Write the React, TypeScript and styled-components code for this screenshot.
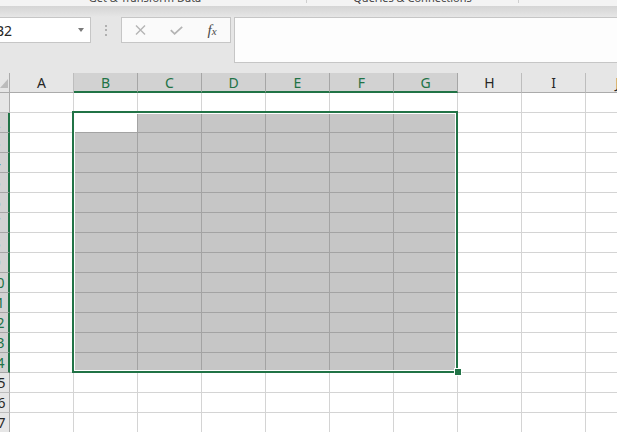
import React from 'react';
import styled, { createGlobalStyle } from 'styled-components';

const GREEN = '#217346';

const GlobalStyle = createGlobalStyle`
  html, body { margin: 0; padding: 0; background: #ffffff; overflow: hidden; }
  body { font-family: "Noto Sans", "Liberation Sans", sans-serif; }
  * { box-sizing: border-box; }
`;

const Window = styled.div`
  width: 617px;
  height: 432px;
  overflow: hidden;
  background: #ffffff;
  display: flex;
  flex-direction: column;
`;

const Ribbon = styled.div`
  height: 6px;
  flex-shrink: 0;
  background: #f3f3f3;
  display: flex;
  overflow: hidden;
`;

const RibbonGroup = styled.div<{ $width: number; $shift?: number }>`
  width: ${p => p.$width}px;
  flex-shrink: 0;
  display: flex;
  justify-content: center;
  padding-right: ${p => p.$shift ?? 1}px;
  background: linear-gradient(#cfcfcf, #cfcfcf) right top / 1px 3px no-repeat;
`;

const RibbonLabel = styled.span`
  font-size: 11px;
  line-height: 14px;
  margin-top: -9px;
  color: #444444;
  white-space: nowrap;
`;

const FormulaArea = styled.div`
  height: 67px;
  flex-shrink: 0;
  background: linear-gradient(#d5d5d5 0px, #dedede 6px, #e6e6e6 11px);
  padding-top: 11px;
  display: flex;
  align-items: flex-start;
`;

const NameBox = styled.div`
  margin-left: -10px;
  width: 101px;
  height: 26px;
  flex-shrink: 0;
  background: #ffffff;
  border: 1px solid #c6c6c6;
  display: flex;
  align-items: center;
  padding-left: 4px;
  padding-right: 6px;
  font-size: 14px;
  color: #262626;
`;

const NameText = styled.span`
  flex: 1;
`;

const DropArrow = styled.span`
  width: 0;
  height: 0;
  border-left: 3px solid transparent;
  border-right: 3px solid transparent;
  border-top: 4px solid #7a7a7a;
`;

const DotsSep = styled.div`
  width: 30px;
  height: 26px;
  flex-shrink: 0;
  display: flex;
  flex-direction: column;
  align-items: center;
  justify-content: center;
  gap: 2.5px;
`;

const Dot = styled.span`
  width: 2px;
  height: 2px;
  background: #b0b0b0;
`;

const ButtonBox = styled.div`
  width: 110px;
  height: 26px;
  flex-shrink: 0;
  background: #fafafa;
  border: 1px solid #c6c6c6;
  display: flex;
  align-items: center;
`;

const IconSlot = styled.div`
  width: 36px;
  height: 24px;
  display: flex;
  align-items: center;
  justify-content: center;
`;

const Fx = styled.span`
  font-family: "Liberation Serif", "DejaVu Serif", serif;
  font-style: italic;
  font-size: 15px;
  color: #4a4a4a;
  line-height: 1;
  & > small {
    font-size: 11px;
  }
`;

const FormulaInput = styled.div`
  margin-left: 3px;
  margin-right: -6px;
  flex: 1;
  height: 46px;
  background: #fdfdfd;
  border: 1px solid #c6c6c6;
`;

const Grid = styled.div`
  position: relative;
  flex: 1;
  display: grid;
  grid-template-columns: 10px repeat(10, 64px);
  grid-auto-rows: 20px;
  overflow: hidden;
  align-content: start;
`;

const Corner = styled.div`
  background: #e6e6e6;
  border-right: 1px solid #ababab;
  border-bottom: 1px solid #ababab;
  display: flex;
  align-items: flex-end;
  justify-content: flex-end;
  padding: 0 1px 4px 0;
  &::before {
    content: '';
    width: 0;
    height: 0;
    border-left: 8px solid transparent;
    border-bottom: 9px solid #bcbcbc;
  }
`;

const ColHeader = styled.div<{ $selected: boolean }>`
  background: ${p => (p.$selected ? '#d2d2d2' : '#e6e6e6')};
  border-right: 1px solid ${p => (p.$selected ? '#a6a6a6' : '#bdbdbd')};
  border-bottom: ${p => (p.$selected ? `2px solid ${GREEN}` : '1px solid #ababab')};
  display: flex;
  align-items: center;
  justify-content: center;
  font-size: 14px;
  color: ${p => (p.$selected ? GREEN : '#262626')};
`;

const RowHeader = styled.div<{ $selected: boolean }>`
  background: ${p => (p.$selected ? '#d2d2d2' : '#e6e6e6')};
  border-right: ${p => (p.$selected ? `2px solid ${GREEN}` : '1px solid #ababab')};
  border-bottom: 1px solid ${p => (p.$selected ? '#a6a6a6' : '#bdbdbd')};
  display: flex;
  justify-content: flex-end;
  align-items: center;
  overflow: hidden;
  font-size: 14px;
  color: ${p => (p.$selected ? GREEN : '#262626')};
`;

const RowLabel = styled.span`
  width: 27px;
  flex-shrink: 0;
  margin-right: -2px;
  text-align: center;
`;

const Cell = styled.div<{ $selected: boolean; $active: boolean }>`
  background: ${p => (p.$active ? '#ffffff' : p.$selected ? '#c6c6c6' : '#ffffff')};
  border-right: 1px solid ${p => (p.$selected ? '#a3a3a3' : '#d4d4d4')};
  border-bottom: 1px solid ${p => (p.$selected ? '#a3a3a3' : '#d4d4d4')};
`;

const SelectionFrame = styled.div`
  position: absolute;
  left: 72px;
  top: 38px;
  width: 386px;
  height: 262px;
  border: 2px solid ${GREEN};
  box-shadow: inset 0 0 0 1px #ffffff;
  pointer-events: none;
`;

const FillHandle = styled.div`
  position: absolute;
  left: 454px;
  top: 295px;
  width: 8px;
  height: 8px;
  background: ${GREEN};
  border: 1px solid #ffffff;
`;

const COLS = ['A', 'B', 'C', 'D', 'E', 'F', 'G', 'H', 'I', 'J'];
const ROWS = Array.from({ length: 17 }, (_, i) => i + 1);

const colSel = (i: number) => i >= 1 && i <= 6;
const rowSel = (r: number) => r >= 2 && r <= 14;

export default function App() {
  return (
    <>
      <GlobalStyle />
      <Window>
        <Ribbon>
          <RibbonGroup $width={307} $shift={17}>
            <RibbonLabel>Get &amp; Transform Data</RibbonLabel>
          </RibbonGroup>
          <RibbonGroup $width={212}>
            <RibbonLabel>Queries &amp; Connections</RibbonLabel>
          </RibbonGroup>
        </Ribbon>

        <FormulaArea>
          <NameBox>
            <NameText>B2</NameText>
            <DropArrow />
          </NameBox>
          <DotsSep>
            <Dot />
            <Dot />
            <Dot />
          </DotsSep>
          <ButtonBox>
            <IconSlot>
              <svg width="11" height="10" viewBox="0 0 11 10">
                <path d="M1 0.5 L10 9.5 M10 0.5 L1 9.5" stroke="#b4b4b4" strokeWidth="1.4" fill="none" />
              </svg>
            </IconSlot>
            <IconSlot>
              <svg width="13" height="9" viewBox="0 0 13 9">
                <path d="M0.8 4.2 L4.6 7.8 L12.2 0.8" stroke="#b4b4b4" strokeWidth="1.8" fill="none" />
              </svg>
            </IconSlot>
            <IconSlot>
              <Fx>
                f<small>x</small>
              </Fx>
            </IconSlot>
          </ButtonBox>
          <FormulaInput />
        </FormulaArea>

        <Grid>
          <Corner />
          {COLS.map((c, i) => (
            <ColHeader key={c} $selected={colSel(i)}>
              {c}
            </ColHeader>
          ))}
          {ROWS.map(r => (
            <React.Fragment key={r}>
              <RowHeader $selected={rowSel(r)}>
                <RowLabel>{r}</RowLabel>
              </RowHeader>
              {COLS.map((c, i) => (
                <Cell
                  key={c + r}
                  $selected={rowSel(r) && colSel(i)}
                  $active={r === 2 && i === 1}
                />
              ))}
            </React.Fragment>
          ))}
          <SelectionFrame />
          <FillHandle />
        </Grid>
      </Window>
    </>
  );
}
